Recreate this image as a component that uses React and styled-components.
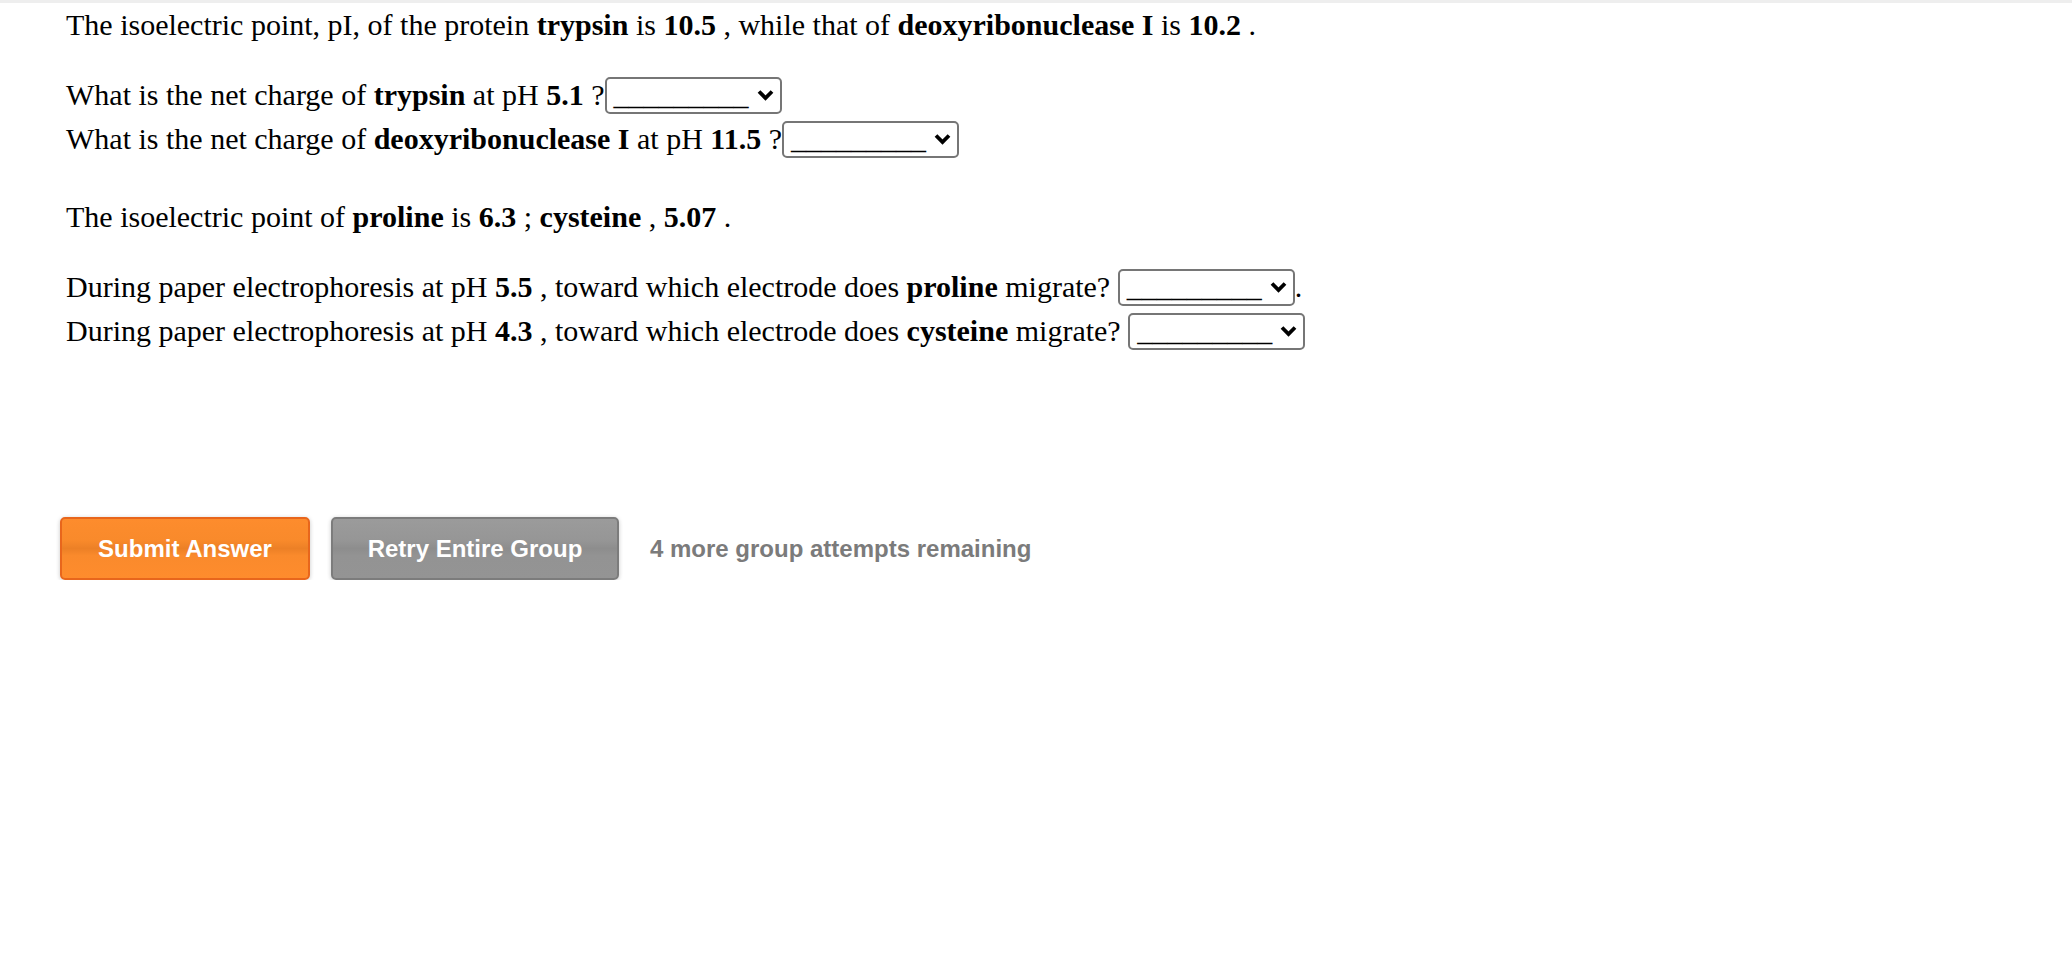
import React from "react";
import styled, { createGlobalStyle } from "styled-components";

const GlobalStyle = createGlobalStyle`
  body {
    margin: 0;
    background: #fff;
  }
`;

// styled components
const TopBar = styled.div`
  height: 3px;
  background: #eeeeee;
`;
const Content = styled.div`
  padding-left: 66px;
  font-family: "Liberation Serif", "Times New Roman", serif;
  font-size: 30px;
  color: #000;
`;
const Line = styled.div`
  line-height: 44px;
  margin-top: ${(p) => p.gap || 0}px;
  white-space: nowrap;
`;
const Bold = styled.b`
  font-weight: 700;
`;
const Dropdown = styled.span`
  display: inline-flex;
  align-items: center;
  justify-content: space-between;
  box-sizing: border-box;
  width: 177px;
  height: 37px;
  padding: 0 6px 0 7px;
  border: 2px solid #767676;
  border-radius: 5px;
  background: #fff;
  vertical-align: baseline;
`;
const Blank = styled.span`
  font-size: 30px;
  line-height: normal;
`;
const Chevron = styled.svg`
  width: 17px;
  height: 12px;
  display: block;
`;
const ButtonRow = styled.div`
  display: flex;
  align-items: center;
  margin-top: 164px;
  margin-left: -6px;
  font-family: "Liberation Sans", Arial, sans-serif;
  font-weight: 700;
  font-size: 24px;
`;
const Button = styled.button`
  box-sizing: border-box;
  width: ${(p) => p.w}px;
  height: 63px;
  margin-right: ${(p) => p.mr}px;
  border-radius: 5px;
  border: 2px solid ${(p) => (p.orange ? "#e8661c" : "#7c7c7c")};
  background: ${(p) =>
    p.orange
      ? "linear-gradient(#fd8c2d 0%, #f98a2b 36%, #ec8026 50%, #fa8a2c 62%, #fe8c2d 100%)"
      : "linear-gradient(#9b9b9b 0%, #969696 36%, #8d8d8d 50%, #939393 62%, #949494 100%)"};
  box-shadow: 0 1px 4px rgba(0, 0, 0, 0.22);
  color: #fff;
  font: inherit;
  padding: 0;
  cursor: pointer;
`;
const Attempts = styled.span`
  color: #7b7b7b;
`;

const Select = () => (
  <Dropdown>
    <Blank>_________</Blank>
    <Chevron viewBox="0 0 17 12">
      <polyline
        points="2,2.5 8.5,9 15,2.5"
        fill="none"
        stroke="#000"
        strokeWidth="3.8"
        strokeLinejoin="miter"
      />
    </Chevron>
  </Dropdown>
);

const App = () => {
  return (
    <>
      <GlobalStyle />
      <TopBar />
      <Content>
        <Line>
          The isoelectric point, pI, of the protein <Bold>trypsin</Bold> is{" "}
          <Bold>10.5</Bold> , while that of <Bold>deoxyribonuclease I</Bold> is{" "}
          <Bold>10.2</Bold> .
        </Line>
        <Line gap={26}>
          What is the net charge of <Bold>trypsin</Bold> at pH <Bold>5.1</Bold> ?
          <Select />
        </Line>
        <Line>
          What is the net charge of <Bold>deoxyribonuclease I</Bold> at pH{" "}
          <Bold>11.5</Bold> ?
          <Select />
        </Line>
        <Line gap={34}>
          The isoelectric point of <Bold>proline</Bold> is <Bold>6.3</Bold> ;{" "}
          <Bold>cysteine</Bold> , <Bold>5.07</Bold> .
        </Line>
        <Line gap={26}>
          During paper electrophoresis at pH <Bold>5.5</Bold> , toward which
          electrode does <Bold>proline</Bold> migrate? <Select />.
        </Line>
        <Line>
          During paper electrophoresis at pH <Bold>4.3</Bold> , toward which
          electrode does <Bold>cysteine</Bold> migrate? <Select />
        </Line>
        <ButtonRow>
          <Button orange w={250} mr={21}>
            Submit Answer
          </Button>
          <Button w={288} mr={31}>
            Retry Entire Group
          </Button>
          <Attempts>4 more group attempts remaining</Attempts>
        </ButtonRow>
      </Content>
    </>
  );
};

export default App;
